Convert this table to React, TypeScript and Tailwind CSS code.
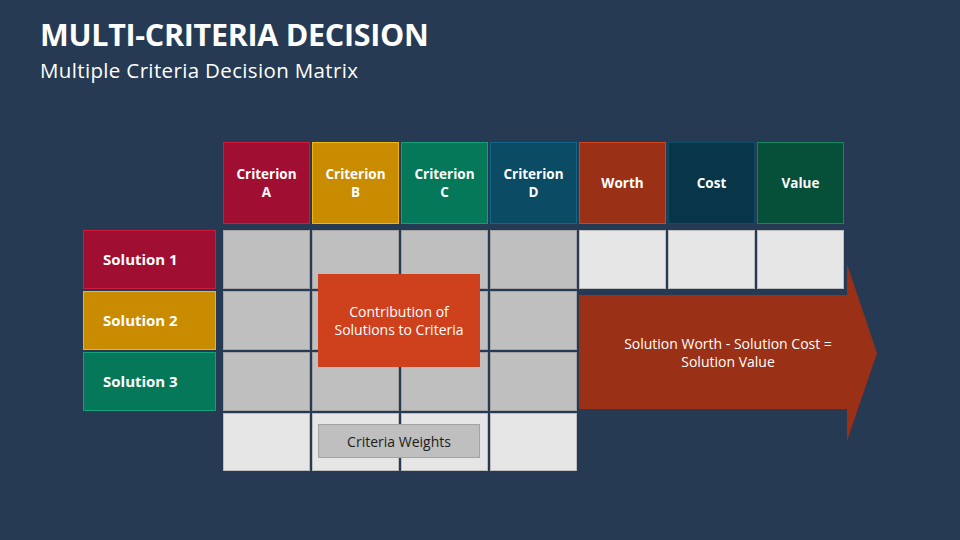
import React from 'react';

const headers = [
  { label: ['Criterion', 'A'], cls: 'bg-[#a00f32] border-[#d01a3c]' },
  { label: ['Criterion', 'B'], cls: 'bg-[#c98b00] border-[#f2b705]' },
  { label: ['Criterion', 'C'], cls: 'bg-[#05785a] border-[#139f78]' },
  { label: ['Criterion', 'D'], cls: 'bg-[#0b4b63] border-[#11678a]' },
  { label: ['Worth'], cls: 'bg-[#9a3015] border-[#d4431c]' },
  { label: ['Cost'], cls: 'bg-[#083548] border-[#0c4c66]' },
  { label: ['Value'], cls: 'bg-[#06503a] border-[#0e8a5e]' },
];

const solutions = [
  { label: 'Solution 1', cls: 'bg-[#a00f32] border-[#d01a3c]' },
  { label: 'Solution 2', cls: 'bg-[#c98b00] border-[#f2b705]' },
  { label: 'Solution 3', cls: 'bg-[#05785a] border-[#139f78]' },
];

const grey = 'bg-[#bfbfbf] border border-[#a3a3a3]';
const light = 'bg-[#e6e6e6] border border-[#bdbdbd]';

export default function App() {
  return (
    <div
      className="w-[960px] h-[540px] bg-[#263a53] text-white overflow-hidden pl-[40px] pt-[13px]"
      style={{ fontFamily: '"Open Sans", "Liberation Sans", sans-serif' }}
    >
      <h1 className="text-[30.5px] font-bold leading-[42px] tracking-[-0.3px]">MULTI-CRITERIA DECISION</h1>
      <p className="text-[20.5px] leading-[28px] mt-[1px] tracking-[0.35px]">Multiple Criteria Decision Matrix</p>

      <div className="relative ml-[43px] mt-[58px] grid grid-cols-[133px_3px_repeat(7,87px)] grid-rows-[82px_2px_59px_59px_59px_58px] gap-[2px]">
        {/* header row */}
        <div />
        <div />
        {headers.map((h) => (
          <div
            key={h.label.join(' ')}
            className={`border flex flex-col items-center justify-center text-[13.5px] font-bold leading-[18px] ${h.cls}`}
          >
            {h.label.map((l) => (
              <span key={l}>{l}</span>
            ))}
          </div>
        ))}

        {/* spacer row */}
        <div className="col-span-9" />

        {/* solution rows */}
        {solutions.map((s, i) => (
          <React.Fragment key={s.label}>
            <div className={`border flex items-center pl-[19px] text-[15px] font-bold ${s.cls}`}>{s.label}</div>
            <div />
            <div className={grey} />
            <div className={grey} />
            <div className={grey} />
            <div className={grey} />
            {i === 0 ? (
              <>
                <div className={light} />
                <div className={light} />
                <div className={light} />
              </>
            ) : (
              <>
                <div />
                <div />
                <div />
              </>
            )}
          </React.Fragment>
        ))}

        {/* weights row */}
        <div />
        <div />
        <div className={light} />
        <div className={light} />
        <div className={light} />
        <div className={light} />
        <div />
        <div />
        <div />

        {/* overlays */}
        <div className="absolute left-[235px] top-[132px] w-[162px] h-[93px] bg-[#cf401c] flex flex-col items-center justify-center text-[14px] leading-[18px]">
          <span>Contribution of</span>
          <span>Solutions to Criteria</span>
        </div>

        <div className="absolute left-[235px] top-[282px] w-[162px] h-[34px] bg-[#bfbfbf] border border-[#a3a3a3] flex items-center justify-center text-[14px] text-[#1c1c1c]">
          Criteria Weights
        </div>

        <div className="absolute left-[496px] top-[122px] w-[298px] h-[177px]">
          <svg width="298" height="177" viewBox="0 0 298 177" className="absolute inset-0">
            <path d="M0 31 H268 V0 L298 89 L268 177 V145 H0 Z" fill="#9a3015" />
          </svg>
          <div className="absolute inset-0 flex flex-col items-center justify-center text-[14px] leading-[18px]">
            <span>Solution Worth - Solution Cost =</span>
            <span>Solution Value</span>
          </div>
        </div>
      </div>
    </div>
  );
}
